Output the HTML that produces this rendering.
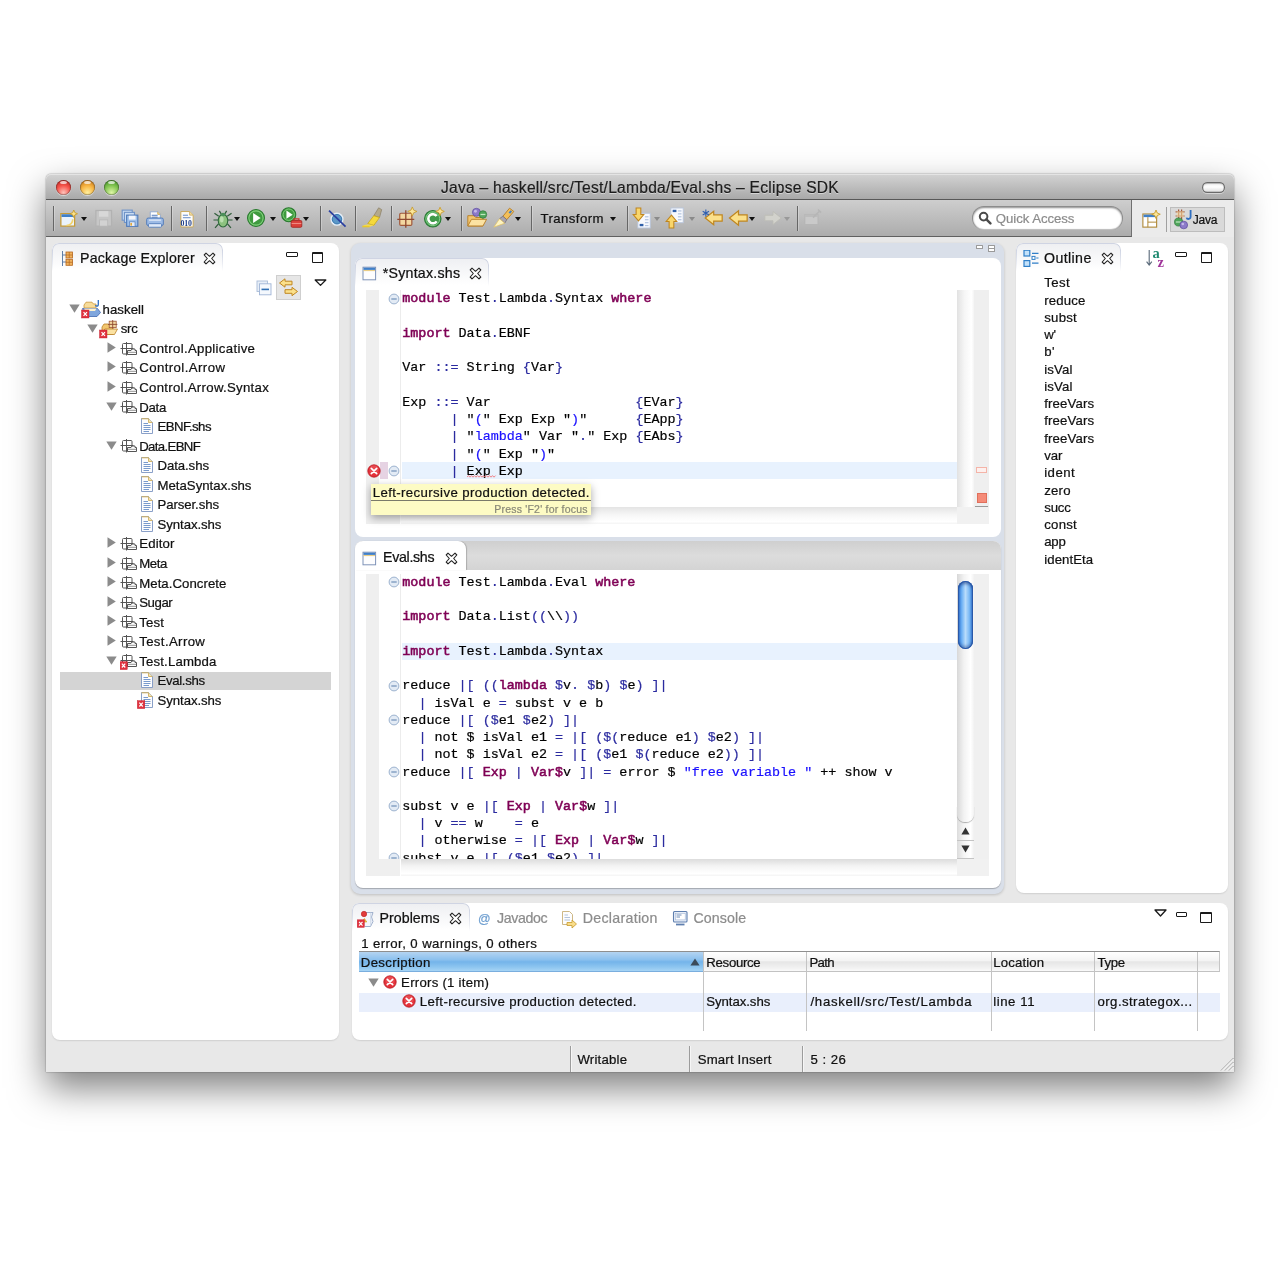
<!DOCTYPE html>
<html lang="en"><head><meta charset="utf-8"><title>Java - haskell/src/Test/Lambda/Eval.shs - Eclipse SDK</title>
<style>
html,body{margin:0;padding:0;background:#fff;}
body{width:1280px;height:1280px;position:relative;overflow:hidden;font-family:"Liberation Sans",sans-serif;font-size:13.2px;color:#000;}
.abs{position:absolute;}
.t{position:absolute;white-space:pre;line-height:1;-webkit-text-stroke:.22px currentColor;}
#root{position:absolute;left:0;top:0;width:1280px;height:1280px;will-change:transform;}
#win{position:absolute;left:45.5px;top:174px;width:1188.7px;height:898px;background:#e8e8e8;border-radius:5px 5px 0 0;box-shadow:0 16px 36px rgba(0,0,0,.5),0 0 1.5px rgba(0,0,0,.6);}
#titlebar{position:absolute;left:45.5px;top:174px;width:1188.7px;height:26px;border-radius:5px 5px 0 0;background:linear-gradient(#d3d3d3,#cdcdcd 15%,#a9a9a9);box-shadow:inset 0 1px 0 #e4e4e4;border-bottom:1px solid #585858;box-sizing:border-box;}
#title{left:45px;top:180px;width:1190px;text-align:center;font-size:15.6px;letter-spacing:.25px;color:#1c1c1c;text-shadow:0 1px 0 rgba(255,255,255,.45);}
.tl{position:absolute;top:179.5px;width:15px;height:15px;border-radius:50%;box-shadow:0 1px 1px rgba(255,255,255,.55),inset 0 0 1px .6px rgba(0,0,0,.45);}
#toolbar{position:absolute;left:45.5px;top:200px;width:1086px;height:36.5px;background:linear-gradient(#cecece,#acacac);border-bottom:1px solid #606060;border-right:1.3px solid #707070;box-sizing:border-box;}
.sep{position:absolute;top:205.6px;width:1.3px;height:25px;background:#666;box-shadow:1px 0 0 rgba(255,255,255,.25);}
.dd{position:absolute;width:0;height:0;border-left:3px solid transparent;border-right:3px solid transparent;border-top:4.6px solid #111;margin-top:1px;}
.dd.dis{border-top-color:#8a8a8a;}
.panel{position:absolute;background:#fff;border-radius:8px;box-shadow:0 1px 1.5px rgba(0,0,0,.1);}
.ui{font-size:13.2px;letter-spacing:.45px;color:#111;}
/*c*/.code{-webkit-text-stroke:.2px currentColor;font-family:"Liberation Mono",monospace;font-size:13.4px;white-space:pre;position:absolute;line-height:17.2px;color:#000;}
.k{color:#7f0055;-webkit-text-stroke:.55px #7f0055;}
.o{color:#2c2ca0;}
.s{color:#1a10ff;}
.tab{background:linear-gradient(#eeeff2,#fff 92%);border-radius:7px 7px 0 0;box-sizing:border-box;}
.tab::after{content:"";position:absolute;left:0;top:0;right:0;bottom:0;border:1px solid #cfd4e3;border-bottom:none;border-radius:7px 7px 0 0;-webkit-mask-image:linear-gradient(#000 25%,transparent 98%);mask-image:linear-gradient(#000 25%,transparent 98%);}
.tabt{font-size:13.6px;letter-spacing:.5px;color:#111;}
.tree{font-size:12.5px;letter-spacing:.39px;color:#111;}
.sq{background:repeating-linear-gradient(135deg,transparent 0,transparent 1px,#e8404a 1px,#e8404a 2px) 0 100%/100% 2px no-repeat;padding-right:4px;margin-right:-4px;}

</style></head>
<body>
<div id="root">
<!-- window -->
<div id="win"></div>
<div id="titlebar"></div>
<div class="tl" style="left:55.7px;background:radial-gradient(circle at 50% 85%,#ffc4bc 0,#f6554c 48%,#c9302a 80%,#8e1d18 100%);"></div>
<div class="tl" style="left:79.9px;background:radial-gradient(circle at 50% 85%,#fff0a0 0,#f7b441 48%,#cf8424 80%,#8f5712 100%);"></div>
<div class="tl" style="left:104.1px;background:radial-gradient(circle at 50% 85%,#e0f7a8 0,#84c653 48%,#4f9a30 80%,#2f6a1c 100%);"></div>
<div class="abs" style="left:59.7px;top:180.6px;width:7px;height:3.6px;border-radius:50%;background:rgba(255,255,255,.7);filter:blur(.6px)"></div>
<div class="abs" style="left:83.9px;top:180.6px;width:7px;height:3.6px;border-radius:50%;background:rgba(255,255,255,.7);filter:blur(.6px)"></div>
<div class="abs" style="left:108.1px;top:180.6px;width:7px;height:3.6px;border-radius:50%;background:rgba(255,255,255,.7);filter:blur(.6px)"></div>
<div class="t" id="title">Java – haskell/src/Test/Lambda/Eval.shs – Eclipse SDK</div>
<div class="abs" style="left:1202px;top:182.3px;width:23px;height:10.4px;border-radius:5.2px;background:linear-gradient(#f0f0f0,#fdfdfd 45%,#d8d8d8);box-shadow:inset 0 0 0 1.2px #6a6a6a,inset 0 2px 1.5px rgba(0,0,0,.18),0 1px 0 rgba(255,255,255,.45);"></div>

<!-- toolbar -->
<div id="toolbar"></div>
<div class="abs" style="left:1131.5px;top:200px;width:102.7px;height:37px;background:#ebebeb;"></div>
<div class="sep" style="left:53px"></div>
<!-- new -->
<svg class="abs" style="left:59px;top:208px" width="20" height="20" viewBox="0 0 16 16"><rect x="1.5" y="4.5" width="11" height="10" fill="#eaf3fc" stroke="#c49a3a"/><rect x="2" y="5" width="10" height="2.2" fill="#3f7fc8"/><path d="M11 9 Q11 13.5 6 14" fill="none" stroke="#f3d36b" stroke-width="1.3"/><path d="M11.8 1.6 L12.7 3.7 L14.8 4.6 L12.7 5.5 L11.8 7.6 L10.9 5.5 L8.8 4.6 L10.9 3.7 Z" fill="#fbe28a" stroke="#c89b2c" stroke-width=".7"/></svg>
<div class="dd" style="left:81px;top:216px"></div>
<!-- save disabled -->
<svg class="abs" style="left:94px;top:208px" width="20" height="20" viewBox="0 0 16 16"><rect x="1.5" y="2" width="12.5" height="12.5" fill="#c6c6c6" stroke="#b2b2b2"/><rect x="4" y="2.5" width="7.5" height="4.5" fill="#d8d8d8"/><rect x="4.5" y="9.5" width="6.5" height="5" fill="#d2d2d2" stroke="#b5b5b5" stroke-width=".6"/></svg>
<!-- save all -->
<svg class="abs" style="left:120.5px;top:209px" width="18" height="19" viewBox="0 0 16 17"><rect x="1" y="1" width="9" height="9" fill="#c9dcf2" stroke="#6f93c8"/><rect x="3" y="3" width="9" height="9" fill="#c9dcf2" stroke="#6f93c8"/><rect x="5" y="5.5" width="10" height="10" fill="#9fc0ea" stroke="#4f79b8"/><rect x="7" y="6" width="6" height="3.5" fill="#f3f6fb"/><rect x="7.5" y="11.5" width="5" height="4" fill="#e9eef7" stroke="#4f79b8" stroke-width=".6"/><rect x="8.3" y="12.5" width="1.5" height="2.4" fill="#e2a93b"/></svg>
<!-- print -->
<svg class="abs" style="left:145px;top:209.5px" width="20" height="19" viewBox="0 0 16 16"><path d="M4 7 V1.5 H10.5 L12.5 3.5 V7 Z" fill="#fff" stroke="#8fa9d1" stroke-width=".8"/><path d="M10.3 1.5 V3.7 H12.5" fill="#f0d48a" stroke="#c9a24a" stroke-width=".6"/><rect x="5.2" y="4" width="5" height=".9" fill="#5f86c4"/><rect x="5.2" y="5.6" width="5" height=".9" fill="#5f86c4"/><rect x="1" y="6.8" width="14" height="6.2" rx="1.2" fill="#9dbbe6" stroke="#4f79b8" stroke-width=".8"/><rect x="2.5" y="11.5" width="11" height="3" rx=".8" fill="#dfe9f8" stroke="#4f79b8" stroke-width=".7"/><rect x="3" y="8" width="10" height="1" fill="#e8f0fb"/></svg>
<div class="sep" style="left:171px"></div>
<!-- binary -->
<svg class="abs" style="left:179px;top:209.5px" width="16" height="18.5" viewBox="0 0 15 18"><path d="M1.5 1.5 H10 L13.5 5 V16.5 H1.5 Z" fill="#fdfdfd" stroke="#c9a655" stroke-width=".9"/><path d="M10 1.5 V5 H13.5" fill="#f4dfa4" stroke="#c9a655" stroke-width=".7"/><rect x="3.5" y="4.6" width="5" height="1" fill="#6b8fc9"/><rect x="3.5" y="7" width="7.5" height="1" fill="#6b8fc9"/><text x="1.2" y="15.6" font-family="Liberation Serif,serif" font-weight="bold" font-size="7.6" fill="#1f3f8a" letter-spacing="-.2">010</text></svg>
<div class="sep" style="left:206px"></div>
<!-- debug bug -->
<svg class="abs" style="left:212px;top:208.5px" width="22" height="22" viewBox="0 0 18 18"><g stroke="#2f5d3a" stroke-width="1" fill="none"><path d="M5.5 6 L2 3.5 M5 9 H1.2 M5.5 12 L2.5 15.5 M12.5 6 L16 3.5 M13 9 H16.8 M12.5 12 L15.5 15.5 M7.5 4 L6 1.5 M10.5 4 L12 1.5"/></g><ellipse cx="9" cy="9.5" rx="3.9" ry="5.2" fill="#8cc27f" stroke="#2f6b3c" stroke-width=".9"/><ellipse cx="9" cy="4.6" rx="2" ry="1.5" fill="#4c8f5a"/><ellipse cx="8" cy="8.5" rx="1.5" ry="2.5" fill="#c6e6bd" opacity=".8"/></svg>
<div class="dd" style="left:234px;top:216px"></div>
<!-- run -->
<svg class="abs" style="left:246.4px;top:208.3px" width="20" height="20" viewBox="0 0 18 18"><circle cx="9" cy="9" r="7.6" fill="#3f9a3f" stroke="#2a7a2f" stroke-width="1"/><circle cx="9" cy="9" r="6.4" fill="none" stroke="#7fcf7a" stroke-width="1"/><path d="M6.4 4.4 L13.2 9 L6.4 13.6 Z" fill="#fff"/></svg>
<div class="dd" style="left:269.5px;top:216px"></div>
<!-- run external -->
<svg class="abs" style="left:280px;top:206px" width="23" height="23" viewBox="0 0 19 19"><circle cx="7.2" cy="7.2" r="5.8" fill="#3f9a3f" stroke="#2a7a2f" stroke-width=".9"/><circle cx="7.2" cy="7.2" r="4.7" fill="none" stroke="#7fcf7a" stroke-width=".8"/><path d="M5.3 3.8 L10.5 7.2 L5.3 10.6 Z" fill="#fff"/><rect x="9.2" y="12" width="8.8" height="5.6" rx="1" fill="#d9403a" stroke="#a32520" stroke-width=".7"/><path d="M11.6 12 V10.6 H15.6 V12" fill="none" stroke="#c5332d" stroke-width="1.1"/><rect x="9.6" y="14" width="8" height=".9" fill="#f08a80"/></svg>
<div class="dd" style="left:303px;top:216px"></div>
<div class="sep" style="left:320px"></div>
<!-- skip breakpoints -->
<svg class="abs" style="left:326px;top:207px" width="22" height="22" viewBox="0 0 18 18"><circle cx="9" cy="10" r="4.6" fill="#5f9fd0" stroke="#e4eef8" stroke-width="1.6"/><circle cx="9" cy="10" r="3.9" fill="#5a97c8" stroke="#2f6fa8" stroke-width=".7"/><path d="M2.5 3 L16 16" stroke="#2a3fa0" stroke-width="1.4"/></svg>
<div class="sep" style="left:355px"></div>
<!-- highlighter -->
<svg class="abs" style="left:361px;top:206px" width="22" height="23" viewBox="0 0 18 19"><path d="M10.5 8 L14.5 1.5 L17 3 L15.2 9.5 Z" fill="#b4a98a" stroke="#8a8068" stroke-width=".6"/><path d="M5.5 14.5 L10.5 8 L15.2 9.5 L10.5 16 Z" fill="#f5d93b" stroke="#c9a91e" stroke-width=".7"/><path d="M1 16.5 Q5 14.5 10.5 16 L6 17.6 Z" fill="#f6dc4a"/><path d="M1 17 H7" stroke="#e8c92c" stroke-width="1.2"/></svg>
<div class="sep" style="left:391px"></div>
<!-- new package -->
<svg class="abs" style="left:396px;top:206px" width="22" height="23" viewBox="0 0 18 19"><rect x="3" y="6" width="10" height="10" rx="1" fill="#f3d7a0" stroke="#a0573a" stroke-width="1"/><path d="M8 3.5 V18 M1 11 H15" stroke="#8f4a30" stroke-width="1.1"/><path d="M13.4 .8 L14.5 3.4 L17.2 4.5 L14.5 5.6 L13.4 8.2 L12.3 5.6 L9.6 4.5 L12.3 3.4 Z" fill="#fbe69a" stroke="#c89b2c" stroke-width=".7"/></svg>
<!-- new class -->
<svg class="abs" style="left:423px;top:206px" width="22" height="23" viewBox="0 0 18 19"><circle cx="8" cy="10.5" r="6.8" fill="#3f9a4a" stroke="#2a7a35" stroke-width=".9"/><circle cx="8" cy="10.5" r="5.7" fill="none" stroke="#86cf8a" stroke-width=".8"/><path d="M11.2 8.3 A3.8 3.8 0 1 0 11.2 12.7" fill="none" stroke="#fff" stroke-width="2.1"/><path d="M14 1 L15 3.4 L17.5 4.5 L15 5.6 L14 8 L13 5.6 L10.5 4.5 L13 3.4 Z" fill="#fbe69a" stroke="#c89b2c" stroke-width=".7"/></svg>
<div class="dd" style="left:445px;top:216px"></div>
<div class="sep" style="left:461px"></div>
<!-- open type -->
<svg class="abs" style="left:466px;top:206px" width="23" height="23" viewBox="0 0 19 19"><path d="M1.5 8 H6.5 L8 9.5 H14 V16.5 H1.5 Z" fill="#f2c66e" stroke="#b9812b" stroke-width=".8"/><path d="M1.5 16.5 L4.5 11 H17 L14 16.5 Z" fill="#fbe2a2" stroke="#b9812b" stroke-width=".8"/><circle cx="8.6" cy="5.2" r="3.3" fill="#8c7ac9" stroke="#5d4c9e" stroke-width=".6"/><circle cx="7.8" cy="4.3" r="1.2" fill="#c3b8ea"/><circle cx="14" cy="7" r="3.1" fill="#4fa55a" stroke="#2f7a3a" stroke-width=".6"/><rect x="12" y="6.5" width="4" height="1" fill="#bfe6c0"/></svg>
<!-- search -->
<svg class="abs" style="left:492px;top:206px" width="23" height="23" viewBox="0 0 19 19"><path d="M9 8.5 L14.5 1.8 L18 4.5 L12.2 11.3 Z" fill="#f2bf5a" stroke="#b9812b" stroke-width=".8"/><rect x="14.3" y="3.6" width="1.6" height="2.6" transform="rotate(40 15 5)" fill="#3f7fc8"/><path d="M6.2 10.5 L9 8.5 L12.2 11.3 L10.5 14.2 Z" fill="#a9a4ae" stroke="#77727c" stroke-width=".7"/><path d="M1.5 17.5 L6.2 10.5 L10.5 14.2 Z" fill="#fdf3c0" stroke="#e3c464" stroke-width=".6"/></svg>
<div class="dd" style="left:515px;top:216px"></div>
<div class="sep" style="left:531px"></div>
<div class="t " style="left:540.5px;top:212px;font-size:13.2px;letter-spacing:0.43px;color:#111;">Transform</div>
<div class="dd" style="left:609.5px;top:216px;border-left-width:3px;border-right-width:3px;"></div>
<div class="sep" style="left:627px"></div>
<!-- next annotation -->
<svg class="abs" style="left:632px;top:206px" width="20" height="24" viewBox="0 0 17 20"><rect x="5" y="6" width="10.5" height="12.5" fill="#f7f9fd" stroke="#b9c6dc" stroke-width=".8"/><rect x="6.5" y="15" width="3.2" height="2" fill="#2f5fa8"/><path d="M11 9 H14 M11 11.5 H14 M11 14 H14 M11 16.5 H14" stroke="#9fb4d6" stroke-width=".8"/><path d="M3.5 1.5 H7.5 V7 H10 L5.5 12.5 L1 7 H3.5 Z" fill="#f9d66b" stroke="#c0861f" stroke-width=".9"/></svg>
<div class="dd dis" style="left:653.5px;top:216px;border-left-width:3px;border-right-width:3px;"></div>
<!-- prev annotation -->
<svg class="abs" style="left:665px;top:206px" width="20" height="24" viewBox="0 0 17 20"><rect x="5" y="1.5" width="10.5" height="12.5" fill="#f7f9fd" stroke="#b9c6dc" stroke-width=".8"/><rect x="6.5" y="3" width="3.2" height="2" fill="#2f5fa8"/><path d="M11 4 H14 M11 6.5 H14 M11 9 H14 M11 11.5 H14" stroke="#9fb4d6" stroke-width=".8"/><path d="M3.5 18.5 H7.5 V13 H10 L5.5 7.5 L1 13 H3.5 Z" fill="#f9d66b" stroke="#c0861f" stroke-width=".9"/></svg>
<div class="dd dis" style="left:688.5px;top:216px;border-left-width:3px;border-right-width:3px;"></div>
<!-- last edit -->
<svg class="abs" style="left:701px;top:208px" width="23" height="20" viewBox="0 0 19 16"><path d="M17.5 5.5 V10.5 H10.5 V13.5 L3.5 8 L10.5 2.5 V5.5 Z" fill="#fbe08a" stroke="#c0861f" stroke-width="1"/><path d="M4 1 V7 M1.4 2.5 L6.6 5.5 M1.4 5.5 L6.6 2.5" stroke="#2f5fb0" stroke-width=".9"/></svg>
<!-- back -->
<svg class="abs" style="left:728px;top:208px" width="21" height="20" viewBox="0 0 17 16"><path d="M15.5 5.5 V10.5 H8.5 V13.8 L1.2 8 L8.5 2.2 V5.5 Z" fill="#fbe08a" stroke="#c0861f" stroke-width="1"/></svg>
<div class="dd" style="left:749px;top:216px"></div>
<!-- forward disabled -->
<svg class="abs" style="left:763px;top:208px" width="20" height="20" viewBox="0 0 16 16"><path d="M1.5 5.8 V10.2 H8 V13.2 L14.6 8 L8 2.8 V5.8 Z" fill="#d2d2cc" stroke="#bdbdb6" stroke-width=".7"/></svg>
<div class="dd dis" style="left:784px;top:216px;border-left-width:3px;border-right-width:3px;border-top-color:#999"></div>
<div class="sep" style="left:797px"></div>
<!-- pin disabled -->
<svg class="abs" style="left:803px;top:207px" width="20" height="20" viewBox="0 0 16 16"><rect x="1.5" y="6" width="10.5" height="8" fill="#c9c9c9" stroke="#b4b4b4" stroke-width=".7"/><rect x="1.5" y="6" width="10.5" height="2" fill="#bcbcbc"/><path d="M8 8.5 L13.5 3 M12 2 L14.5 4.5" stroke="#b6b6b6" stroke-width="1.2"/></svg>
<!-- quick access -->
<div class="abs" style="left:973px;top:207px;width:149px;height:22px;border-radius:11px;background:#fff;box-shadow:inset 0 1px 2px rgba(0,0,0,.45),0 1px 0 rgba(255,255,255,.45),0 0 0 1px #8c8c8c;"></div>
<svg class="abs" style="left:978px;top:211px" width="14" height="14" viewBox="0 0 14 14"><circle cx="5.6" cy="5.6" r="3.8" fill="none" stroke="#4a4a4a" stroke-width="2"/><path d="M8.4 8.4 L12.4 12.4" stroke="#4a4a4a" stroke-width="2.4" stroke-linecap="round"/></svg>
<div class="t " style="left:995.8px;top:212px;font-size:13.2px;letter-spacing:-0.05px;color:#8c8c8c;">Quick Access</div>
<!-- perspective -->
<svg class="abs" style="left:1141px;top:209px" width="20" height="20" viewBox="0 0 16 16"><rect x="1.5" y="4" width="11" height="10.5" fill="#fff" stroke="#b08a3a" stroke-width=".9"/><rect x="2" y="4.5" width="10" height="2" fill="#3f7fc8"/><path d="M5.5 6.5 V14.5 M5.5 10.5 H12.5" stroke="#b08a3a" stroke-width=".8"/><path d="M12 .8 L13 3.2 L15.4 4.2 L13 5.2 L12 7.6 L11 5.2 L8.6 4.2 L11 3.2 Z" fill="#fbe69a" stroke="#c89b2c" stroke-width=".7"/></svg>
<div class="abs" style="left:1166px;top:207px;width:1px;height:25px;background:#a0a0a0;"></div>
<div class="abs" style="left:1170px;top:207px;width:55px;height:25px;background:#d9d9d9;border:1px solid #bdbdbd;box-sizing:border-box;"></div>
<svg class="abs" style="left:1172px;top:208px" width="24" height="22" viewBox="0 0 20 18"><path d="M5.5 1 V9 M8 1 V9 M3 3 H10.5 M3 6.5 H10.5" stroke="#a0573a" stroke-width="1" fill="none"/><rect x="3.8" y="2.5" width="6" height="5" fill="#f3d7a0" opacity=".6"/><circle cx="5.5" cy="11.5" r="3.4" fill="#4fa55a" stroke="#2f7a3a" stroke-width=".6"/><rect x="3.2" y="11" width="4.6" height="1" fill="#bfe6c0"/><circle cx="9.8" cy="14" r="3.2" fill="#8c7ac9" stroke="#5d4c9e" stroke-width=".6"/><circle cx="9" cy="13.2" r="1.1" fill="#c3b8ea"/><path d="M15.5 1.5 V7 Q15.5 9 13.6 9 Q12.4 9 12.2 7.8" fill="none" stroke="#2f6fc0" stroke-width="1.5"/></svg>
<div class="t " style="left:1192.8px;top:214px;font-size:12px;letter-spacing:-0.22px;color:#111;">Java</div>

<!-- explorer -->
<div class="panel" style="left:52px;top:243px;width:287px;height:797px;"></div>
<div class="abs tab" style="left:52px;top:243px;width:171px;height:29px;"></div>
<svg class="abs" style="left:61px;top:250px" width="14" height="17" viewBox="0 0 14 17"><path d="M1.5 1 V16 M1.5 5 H5 M1.5 12 H5" stroke="#5f7fa8" stroke-width="1" fill="none"/><rect x="5" y="2" width="6.5" height="6" fill="#f0b35e" stroke="#b5651d" stroke-width=".8"/><path d="M8.25 2 V8 M5 5 H11.5" stroke="#b5651d" stroke-width=".7"/><rect x="5" y="9.3" width="6.5" height="6" fill="#f0b35e" stroke="#b5651d" stroke-width=".8"/><path d="M8.25 9.3 V15.3 M5 12.3 H11.5" stroke="#b5651d" stroke-width=".7"/></svg>
<div class="t tabt" style="left:80.1px;top:251px;font-size:14.2px;letter-spacing:0.17px;">Package Explorer</div>
<svg class="abs" style="left:202.5px;top:252px" width="13" height="13" viewBox="0 0 13 13"><path d="M1.2 3 L3 1.2 L6.5 4.3 L10 1.2 L11.8 3 L8.7 6.5 L11.8 10 L10 11.8 L6.5 8.7 L3 11.8 L1.2 10 L4.3 6.5 Z" fill="#fff" stroke="#222" stroke-width="1.1" stroke-linejoin="round"/></svg>
<div class="abs" style="left:286px;top:251.8px;width:12px;height:5px;border:1.6px solid #1a1a1a;border-radius:1px;box-sizing:border-box;background:#fff"></div>
<div class="abs" style="left:311.5px;top:252px;width:11.8px;height:11.2px;border:1.4px solid #1a1a1a;border-top-width:2.4px;border-radius:1px;box-sizing:border-box;background:#fff"></div>
<svg class="abs" style="left:256px;top:280px" width="16" height="16" viewBox="0 0 16 16"><rect x="1" y="1" width="10.5" height="10.5" fill="#e7eef8" stroke="#a9bcd8" stroke-width=".9"/><rect x="3.5" y="3.8" width="11.5" height="11" fill="#f4f8fd" stroke="#9fb4d6" stroke-width=".9"/><rect x="5.5" y="8.6" width="7.5" height="1.6" fill="#2f6fb5"/></svg>
<div class="abs" style="left:276px;top:275px;width:25px;height:25px;background:#e6e6e6;border:1px solid #cfcfcf;box-sizing:border-box;"></div>
<svg class="abs" style="left:278px;top:277px" width="21" height="21" viewBox="0 0 21 21"><path d="M1.5 6 L7 1.8 V4.2 H14 V7.8 H7 V10.2 Z" fill="#fbe08a" stroke="#c0861f" stroke-width="1"/><path d="M19.5 14.5 L14 10.3 V12.7 H7 V16.3 H14 V18.7 Z" fill="#fbe08a" stroke="#c0861f" stroke-width="1"/></svg>
<svg class="abs" style="left:314.3px;top:278.6px" width="13" height="8" viewBox="0 0 13 8"><path d="M1.2 1 H11.8 L6.5 6.4 Z" fill="#fff" stroke="#1a1a1a" stroke-width="1.3" stroke-linejoin="round"/></svg>
<svg class="abs" style="left:68.7px;top:304.3px" width="11" height="9" viewBox="0 0 11 9"><path d="M.3 .5 H10.7 L5.5 8.8 Z" fill="#8b8b8b"/></svg>
<svg class="abs" style="left:81.2px;top:299.2px" width="21" height="20" viewBox="0 0 21 20"><path d="M3 6 L5 3.2 H11 L12.5 5 H15 V9 H3 Z" fill="#f7dc9a" stroke="#c9963a" stroke-width=".8"/><path d="M1.5 9.5 H16.5 L19.5 13.5 L16 17.5 H4 Z" fill="#7fa6dd" stroke="#3f67b0" stroke-width=".8"/><path d="M3 9.5 H15.5 L14 12 H4.5 Z" fill="#fdf2cf"/><path d="M17.3 1 V5.5 Q17.3 7.2 15.7 7.2 Q14.7 7.2 14.5 6.2" fill="none" stroke="#2f6fc0" stroke-width="1.3"/><rect x="0.5" y="11" width="7.5" height="8" fill="#e0333f" stroke="#c01828" stroke-width=".4"/><path d="M2.55 13.1 l3.4 3.8 m0 -3.8 l-3.4 3.8" stroke="#fff" stroke-width="1.2"/></svg>
<div class="t tree" style="left:102.5px;top:303px;font-size:13.2px;letter-spacing:0.08px;">haskell</div>
<svg class="abs" style="left:87.2px;top:323.9px" width="11" height="9" viewBox="0 0 11 9"><path d="M.3 .5 H10.7 L5.5 8.8 Z" fill="#8b8b8b"/></svg>
<svg class="abs" style="left:99.4px;top:319.2px" width="21" height="20" viewBox="0 0 21 20"><path d="M3 8 L5 5 H9.5 L11 7 H14 V15.5 H3 Z" fill="#f2c66e" stroke="#b9812b" stroke-width=".8"/><path d="M3 15.5 L5.8 10 H18.5 L15.5 15.5 Z" fill="#fbe2a2" stroke="#b9812b" stroke-width=".8"/><rect x="10.2" y="2.2" width="7" height="6.4" fill="#f3d7a0" stroke="#a0573a" stroke-width=".8"/><path d="M13.7 1 V9.6 M9 5.4 H18.4" stroke="#8f4a30" stroke-width=".9"/><rect x="0.5" y="11" width="7.5" height="8" fill="#e0333f" stroke="#c01828" stroke-width=".4"/><path d="M2.55 13.1 l3.4 3.8 m0 -3.8 l-3.4 3.8" stroke="#fff" stroke-width="1.2"/></svg>
<div class="t tree" style="left:120.8px;top:322px;font-size:13.2px;letter-spacing:-0.29px;">src</div>
<svg class="abs" style="left:106.7px;top:341.6px" width="9" height="11" viewBox="0 0 9 11"><path d="M.5 .3 V10.7 L8.8 5.5 Z" fill="#8b8b8b"/></svg>
<svg class="abs" style="left:119.5px;top:340.6px" width="18" height="17" viewBox="0 0 18 17"><rect x="2.5" y="2.5" width="9.5" height="10.5" rx="1" fill="#fff" stroke="#555" stroke-width="1"/><path d="M6.5 1 V14.5 M.5 7.5 H13.5" stroke="#555" stroke-width="1"/><path d="M7.5 9.5 H11 L12 8 H15 V9.5 H16.5 V13.5 H7.5 Z" fill="#fff" stroke="#555" stroke-width="1"/><path d="M8 11.3 H16" stroke="#777" stroke-width=".8"/></svg>
<div class="t tree" style="left:139.2px;top:342px;font-size:13.2px;letter-spacing:0.32px;">Control.Applicative</div>
<svg class="abs" style="left:106.7px;top:361.2px" width="9" height="11" viewBox="0 0 9 11"><path d="M.5 .3 V10.7 L8.8 5.5 Z" fill="#8b8b8b"/></svg>
<svg class="abs" style="left:119.5px;top:360.2px" width="18" height="17" viewBox="0 0 18 17"><rect x="2.5" y="2.5" width="9.5" height="10.5" rx="1" fill="#fff" stroke="#555" stroke-width="1"/><path d="M6.5 1 V14.5 M.5 7.5 H13.5" stroke="#555" stroke-width="1"/><path d="M7.5 9.5 H11 L12 8 H15 V9.5 H16.5 V13.5 H7.5 Z" fill="#fff" stroke="#555" stroke-width="1"/><path d="M8 11.3 H16" stroke="#777" stroke-width=".8"/></svg>
<div class="t tree" style="left:139.2px;top:361px;font-size:13.2px;letter-spacing:0.43px;">Control.Arrow</div>
<svg class="abs" style="left:106.7px;top:380.7px" width="9" height="11" viewBox="0 0 9 11"><path d="M.5 .3 V10.7 L8.8 5.5 Z" fill="#8b8b8b"/></svg>
<svg class="abs" style="left:119.5px;top:379.7px" width="18" height="17" viewBox="0 0 18 17"><rect x="2.5" y="2.5" width="9.5" height="10.5" rx="1" fill="#fff" stroke="#555" stroke-width="1"/><path d="M6.5 1 V14.5 M.5 7.5 H13.5" stroke="#555" stroke-width="1"/><path d="M7.5 9.5 H11 L12 8 H15 V9.5 H16.5 V13.5 H7.5 Z" fill="#fff" stroke="#555" stroke-width="1"/><path d="M8 11.3 H16" stroke="#777" stroke-width=".8"/></svg>
<div class="t tree" style="left:139.2px;top:381px;font-size:13.2px;letter-spacing:0.30px;">Control.Arrow.Syntax</div>
<svg class="abs" style="left:105.8px;top:402.1px" width="11" height="9" viewBox="0 0 11 9"><path d="M.3 .5 H10.7 L5.5 8.8 Z" fill="#8b8b8b"/></svg>
<svg class="abs" style="left:119.5px;top:399.2px" width="18" height="17" viewBox="0 0 18 17"><rect x="2.5" y="2.5" width="9.5" height="10.5" rx="1" fill="#fff" stroke="#555" stroke-width="1"/><path d="M6.5 1 V14.5 M.5 7.5 H13.5" stroke="#555" stroke-width="1"/><path d="M7.5 9.5 H11 L12 8 H15 V9.5 H16.5 V13.5 H7.5 Z" fill="#fff" stroke="#555" stroke-width="1"/><path d="M8 11.3 H16" stroke="#777" stroke-width=".8"/></svg>
<div class="t tree" style="left:139.2px;top:401px;font-size:13.2px;letter-spacing:-0.27px;">Data</div>
<svg class="abs" style="left:136.5px;top:416.8px" width="17" height="18" viewBox="0 0 17 18"><path d="M4.5 1.5 H11.5 L15.5 5.5 V16.5 H4.5 Z" fill="#fdfdfe" stroke="#7d95c2" stroke-width=".9"/><path d="M4.5 1.8 H11.3" stroke="#d6b35a" stroke-width="1"/><path d="M11.5 1.5 V5.5 H15.5" fill="#f6e3aa" stroke="#c9a655" stroke-width=".8"/><path d="M6.5 6.5 H11 M6.5 8.5 H13.5 M6.5 10.5 H13.5 M6.5 12.5 H13.5 M6.5 14.5 H12" stroke="#6a8fc6" stroke-width=".9"/></svg>
<div class="t tree" style="left:157.5px;top:420px;font-size:13.2px;letter-spacing:-0.56px;">EBNF.shs</div>
<svg class="abs" style="left:105.8px;top:441.1px" width="11" height="9" viewBox="0 0 11 9"><path d="M.3 .5 H10.7 L5.5 8.8 Z" fill="#8b8b8b"/></svg>
<svg class="abs" style="left:119.5px;top:438.3px" width="18" height="17" viewBox="0 0 18 17"><rect x="2.5" y="2.5" width="9.5" height="10.5" rx="1" fill="#fff" stroke="#555" stroke-width="1"/><path d="M6.5 1 V14.5 M.5 7.5 H13.5" stroke="#555" stroke-width="1"/><path d="M7.5 9.5 H11 L12 8 H15 V9.5 H16.5 V13.5 H7.5 Z" fill="#fff" stroke="#555" stroke-width="1"/><path d="M8 11.3 H16" stroke="#777" stroke-width=".8"/></svg>
<div class="t tree" style="left:139.2px;top:440px;font-size:13.2px;letter-spacing:-0.64px;">Data.EBNF</div>
<svg class="abs" style="left:136.5px;top:455.9px" width="17" height="18" viewBox="0 0 17 18"><path d="M4.5 1.5 H11.5 L15.5 5.5 V16.5 H4.5 Z" fill="#fdfdfe" stroke="#7d95c2" stroke-width=".9"/><path d="M4.5 1.8 H11.3" stroke="#d6b35a" stroke-width="1"/><path d="M11.5 1.5 V5.5 H15.5" fill="#f6e3aa" stroke="#c9a655" stroke-width=".8"/><path d="M6.5 6.5 H11 M6.5 8.5 H13.5 M6.5 10.5 H13.5 M6.5 12.5 H13.5 M6.5 14.5 H12" stroke="#6a8fc6" stroke-width=".9"/></svg>
<div class="t tree" style="left:157.5px;top:459px;font-size:13.2px;letter-spacing:-0.08px;">Data.shs</div>
<svg class="abs" style="left:136.5px;top:475.4px" width="17" height="18" viewBox="0 0 17 18"><path d="M4.5 1.5 H11.5 L15.5 5.5 V16.5 H4.5 Z" fill="#fdfdfe" stroke="#7d95c2" stroke-width=".9"/><path d="M4.5 1.8 H11.3" stroke="#d6b35a" stroke-width="1"/><path d="M11.5 1.5 V5.5 H15.5" fill="#f6e3aa" stroke="#c9a655" stroke-width=".8"/><path d="M6.5 6.5 H11 M6.5 8.5 H13.5 M6.5 10.5 H13.5 M6.5 12.5 H13.5 M6.5 14.5 H12" stroke="#6a8fc6" stroke-width=".9"/></svg>
<div class="t tree" style="left:157.5px;top:479px;font-size:13.2px;letter-spacing:0.01px;">MetaSyntax.shs</div>
<svg class="abs" style="left:136.5px;top:495.0px" width="17" height="18" viewBox="0 0 17 18"><path d="M4.5 1.5 H11.5 L15.5 5.5 V16.5 H4.5 Z" fill="#fdfdfe" stroke="#7d95c2" stroke-width=".9"/><path d="M4.5 1.8 H11.3" stroke="#d6b35a" stroke-width="1"/><path d="M11.5 1.5 V5.5 H15.5" fill="#f6e3aa" stroke="#c9a655" stroke-width=".8"/><path d="M6.5 6.5 H11 M6.5 8.5 H13.5 M6.5 10.5 H13.5 M6.5 12.5 H13.5 M6.5 14.5 H12" stroke="#6a8fc6" stroke-width=".9"/></svg>
<div class="t tree" style="left:157.5px;top:498px;font-size:13.2px;letter-spacing:-0.09px;">Parser.shs</div>
<svg class="abs" style="left:136.5px;top:514.6px" width="17" height="18" viewBox="0 0 17 18"><path d="M4.5 1.5 H11.5 L15.5 5.5 V16.5 H4.5 Z" fill="#fdfdfe" stroke="#7d95c2" stroke-width=".9"/><path d="M4.5 1.8 H11.3" stroke="#d6b35a" stroke-width="1"/><path d="M11.5 1.5 V5.5 H15.5" fill="#f6e3aa" stroke="#c9a655" stroke-width=".8"/><path d="M6.5 6.5 H11 M6.5 8.5 H13.5 M6.5 10.5 H13.5 M6.5 12.5 H13.5 M6.5 14.5 H12" stroke="#6a8fc6" stroke-width=".9"/></svg>
<div class="t tree" style="left:157.5px;top:518px;font-size:13.2px;letter-spacing:-0.06px;">Syntax.shs</div>
<svg class="abs" style="left:106.7px;top:537.1px" width="9" height="11" viewBox="0 0 9 11"><path d="M.5 .3 V10.7 L8.8 5.5 Z" fill="#8b8b8b"/></svg>
<svg class="abs" style="left:119.5px;top:536.1px" width="18" height="17" viewBox="0 0 18 17"><rect x="2.5" y="2.5" width="9.5" height="10.5" rx="1" fill="#fff" stroke="#555" stroke-width="1"/><path d="M6.5 1 V14.5 M.5 7.5 H13.5" stroke="#555" stroke-width="1"/><path d="M7.5 9.5 H11 L12 8 H15 V9.5 H16.5 V13.5 H7.5 Z" fill="#fff" stroke="#555" stroke-width="1"/><path d="M8 11.3 H16" stroke="#777" stroke-width=".8"/></svg>
<div class="t tree" style="left:139.2px;top:537px;font-size:13.2px;letter-spacing:0.16px;">Editor</div>
<svg class="abs" style="left:106.7px;top:556.7px" width="9" height="11" viewBox="0 0 9 11"><path d="M.5 .3 V10.7 L8.8 5.5 Z" fill="#8b8b8b"/></svg>
<svg class="abs" style="left:119.5px;top:555.7px" width="18" height="17" viewBox="0 0 18 17"><rect x="2.5" y="2.5" width="9.5" height="10.5" rx="1" fill="#fff" stroke="#555" stroke-width="1"/><path d="M6.5 1 V14.5 M.5 7.5 H13.5" stroke="#555" stroke-width="1"/><path d="M7.5 9.5 H11 L12 8 H15 V9.5 H16.5 V13.5 H7.5 Z" fill="#fff" stroke="#555" stroke-width="1"/><path d="M8 11.3 H16" stroke="#777" stroke-width=".8"/></svg>
<div class="t tree" style="left:139.2px;top:557px;font-size:13.2px;letter-spacing:-0.36px;">Meta</div>
<svg class="abs" style="left:106.7px;top:576.2px" width="9" height="11" viewBox="0 0 9 11"><path d="M.5 .3 V10.7 L8.8 5.5 Z" fill="#8b8b8b"/></svg>
<svg class="abs" style="left:119.5px;top:575.2px" width="18" height="17" viewBox="0 0 18 17"><rect x="2.5" y="2.5" width="9.5" height="10.5" rx="1" fill="#fff" stroke="#555" stroke-width="1"/><path d="M6.5 1 V14.5 M.5 7.5 H13.5" stroke="#555" stroke-width="1"/><path d="M7.5 9.5 H11 L12 8 H15 V9.5 H16.5 V13.5 H7.5 Z" fill="#fff" stroke="#555" stroke-width="1"/><path d="M8 11.3 H16" stroke="#777" stroke-width=".8"/></svg>
<div class="t tree" style="left:139.2px;top:577px;font-size:13.2px;letter-spacing:0.06px;">Meta.Concrete</div>
<svg class="abs" style="left:106.7px;top:595.8px" width="9" height="11" viewBox="0 0 9 11"><path d="M.5 .3 V10.7 L8.8 5.5 Z" fill="#8b8b8b"/></svg>
<svg class="abs" style="left:119.5px;top:594.8px" width="18" height="17" viewBox="0 0 18 17"><rect x="2.5" y="2.5" width="9.5" height="10.5" rx="1" fill="#fff" stroke="#555" stroke-width="1"/><path d="M6.5 1 V14.5 M.5 7.5 H13.5" stroke="#555" stroke-width="1"/><path d="M7.5 9.5 H11 L12 8 H15 V9.5 H16.5 V13.5 H7.5 Z" fill="#fff" stroke="#555" stroke-width="1"/><path d="M8 11.3 H16" stroke="#777" stroke-width=".8"/></svg>
<div class="t tree" style="left:139.2px;top:596px;font-size:13.2px;letter-spacing:-0.41px;">Sugar</div>
<svg class="abs" style="left:106.7px;top:615.3px" width="9" height="11" viewBox="0 0 9 11"><path d="M.5 .3 V10.7 L8.8 5.5 Z" fill="#8b8b8b"/></svg>
<svg class="abs" style="left:119.5px;top:614.3px" width="18" height="17" viewBox="0 0 18 17"><rect x="2.5" y="2.5" width="9.5" height="10.5" rx="1" fill="#fff" stroke="#555" stroke-width="1"/><path d="M6.5 1 V14.5 M.5 7.5 H13.5" stroke="#555" stroke-width="1"/><path d="M7.5 9.5 H11 L12 8 H15 V9.5 H16.5 V13.5 H7.5 Z" fill="#fff" stroke="#555" stroke-width="1"/><path d="M8 11.3 H16" stroke="#777" stroke-width=".8"/></svg>
<div class="t tree" style="left:139.2px;top:616px;font-size:13.2px;letter-spacing:0.19px;">Test</div>
<svg class="abs" style="left:106.7px;top:634.9px" width="9" height="11" viewBox="0 0 9 11"><path d="M.5 .3 V10.7 L8.8 5.5 Z" fill="#8b8b8b"/></svg>
<svg class="abs" style="left:119.5px;top:633.9px" width="18" height="17" viewBox="0 0 18 17"><rect x="2.5" y="2.5" width="9.5" height="10.5" rx="1" fill="#fff" stroke="#555" stroke-width="1"/><path d="M6.5 1 V14.5 M.5 7.5 H13.5" stroke="#555" stroke-width="1"/><path d="M7.5 9.5 H11 L12 8 H15 V9.5 H16.5 V13.5 H7.5 Z" fill="#fff" stroke="#555" stroke-width="1"/><path d="M8 11.3 H16" stroke="#777" stroke-width=".8"/></svg>
<div class="t tree" style="left:139.2px;top:635px;font-size:13.2px;letter-spacing:0.38px;">Test.Arrow</div>
<svg class="abs" style="left:105.8px;top:656.2px" width="11" height="9" viewBox="0 0 11 9"><path d="M.3 .5 H10.7 L5.5 8.8 Z" fill="#8b8b8b"/></svg>
<svg class="abs" style="left:119.5px;top:653.4px" width="18" height="17" viewBox="0 0 18 17"><rect x="2.5" y="2.5" width="9.5" height="10.5" rx="1" fill="#fff" stroke="#555" stroke-width="1"/><path d="M6.5 1 V14.5 M.5 7.5 H13.5" stroke="#555" stroke-width="1"/><path d="M7.5 9.5 H11 L12 8 H15 V9.5 H16.5 V13.5 H7.5 Z" fill="#fff" stroke="#555" stroke-width="1"/><path d="M8 11.3 H16" stroke="#777" stroke-width=".8"/><rect x="-0.2" y="8.6" width="7.5" height="8" fill="#e0333f" stroke="#c01828" stroke-width=".4"/><path d="M1.8499999999999999 10.7 l3.4 3.8 m0 -3.8 l-3.4 3.8" stroke="#fff" stroke-width="1.2"/></svg>
<div class="t tree" style="left:139.2px;top:655px;font-size:13.2px;letter-spacing:0.17px;">Test.Lambda</div>
<div class="abs" style="left:60px;top:672.2px;width:271px;height:17.6px;background:#d4d4d4;"></div>
<svg class="abs" style="left:136.5px;top:671.0px" width="17" height="18" viewBox="0 0 17 18"><path d="M4.5 1.5 H11.5 L15.5 5.5 V16.5 H4.5 Z" fill="#fdfdfe" stroke="#7d95c2" stroke-width=".9"/><path d="M4.5 1.8 H11.3" stroke="#d6b35a" stroke-width="1"/><path d="M11.5 1.5 V5.5 H15.5" fill="#f6e3aa" stroke="#c9a655" stroke-width=".8"/><path d="M6.5 6.5 H11 M6.5 8.5 H13.5 M6.5 10.5 H13.5 M6.5 12.5 H13.5 M6.5 14.5 H12" stroke="#6a8fc6" stroke-width=".9"/></svg>
<div class="t tree" style="left:157.5px;top:674px;font-size:13.2px;letter-spacing:-0.33px;">Eval.shs</div>
<svg class="abs" style="left:136.5px;top:690.5px" width="17" height="18" viewBox="0 0 17 18"><path d="M4.5 1.5 H11.5 L15.5 5.5 V16.5 H4.5 Z" fill="#fdfdfe" stroke="#7d95c2" stroke-width=".9"/><path d="M4.5 1.8 H11.3" stroke="#d6b35a" stroke-width="1"/><path d="M11.5 1.5 V5.5 H15.5" fill="#f6e3aa" stroke="#c9a655" stroke-width=".8"/><path d="M6.5 6.5 H11 M6.5 8.5 H13.5 M6.5 10.5 H13.5 M6.5 12.5 H13.5 M6.5 14.5 H12" stroke="#6a8fc6" stroke-width=".9"/><rect x="0.3" y="9.6" width="7.5" height="8" fill="#e0333f" stroke="#c01828" stroke-width=".4"/><path d="M2.3499999999999996 11.7 l3.4 3.8 m0 -3.8 l-3.4 3.8" stroke="#fff" stroke-width="1.2"/></svg>
<div class="t tree" style="left:157.5px;top:694px;font-size:13.2px;letter-spacing:-0.06px;">Syntax.shs</div>
<!-- editors -->
<div class="abs" style="left:351px;top:243px;width:652.5px;height:650.5px;background:#d9dfe9;border-radius:9px;box-shadow:0 1px 3px rgba(0,0,0,.18);"></div>
<div class="abs" style="left:976.3px;top:245px;width:7px;height:3.6px;border:1px solid #9a9a9a;box-sizing:border-box;background:#fff;border-radius:.5px"></div>
<div class="abs" style="left:988px;top:245px;width:7px;height:6.6px;border:1px solid #9a9a9a;box-sizing:border-box;background:linear-gradient(#fff 0,#fff 1.6px,#9a9a9a 1.6px,#9a9a9a 2.6px,#fff 2.6px);border-radius:.5px"></div>
<div class="abs" style="left:354.5px;top:257.7px;width:646px;height:279px;background:#fff;border-radius:8px;"></div>
<div class="abs tab" style="left:354.5px;top:257.7px;width:134.5px;height:29.3px;"></div>
<svg class="abs" style="left:361.8px;top:266.3px" width="15" height="15" viewBox="0 0 15 15"><rect x="1" y="1.2" width="12.6" height="12.6" fill="#fdfdfe" stroke="#7f93b8" stroke-width="1"/><rect x="1.5" y="1.7" width="11.6" height="2.2" fill="#3f7fc8"/><path d="M1.5 4.6 H13" stroke="#e6c36a" stroke-width=".9"/></svg>
<div class="t tabt" style="left:382.8px;top:266px;font-size:14.2px;letter-spacing:0.23px;">*Syntax.shs</div>
<svg class="abs" style="left:468.5px;top:267px" width="13" height="13" viewBox="0 0 13 13"><path d="M1.2 3 L3 1.2 L6.5 4.3 L10 1.2 L11.8 3 L8.7 6.5 L11.8 10 L10 11.8 L6.5 8.7 L3 11.8 L1.2 10 L4.3 6.5 Z" fill="#fff" stroke="#222" stroke-width="1.1" stroke-linejoin="round"/></svg>
<div class="abs" style="left:365.8px;top:290px;width:13.5px;height:233.5px;background:#efefef;"></div>
<div class="abs" style="left:379.3px;top:507px;width:21px;height:16.5px;background:#efefef;"></div>
<div class="abs" style="left:399.5px;top:290px;width:1px;height:217px;background:#ececec;"></div>
<div class="abs" style="left:402px;top:462.3px;width:555px;height:16.9px;background:#e8f2fe;"></div>
<div class="abs" style="left:957px;top:290px;width:17px;height:217px;background:linear-gradient(90deg,#e2e2e2,#f6f6f6 45%,#fff 85%,#f4f4f4);"></div>
<div class="abs" style="left:974px;top:290px;width:15px;height:217px;background:#efefef;"></div>
<div class="abs" style="left:957px;top:507px;width:32px;height:16.5px;background:#f1f1f1;"></div>
<div class="abs" style="left:400.5px;top:507px;width:556.5px;height:16.5px;background:linear-gradient(#e4e4e4,#f6f6f6 45%,#fff 85%,#f4f4f4);"></div>
<div class="abs" style="left:976.4px;top:467px;width:10.6px;height:5.6px;border:1.3px solid #f4b4a8;box-sizing:border-box;background:#fdf0ee;"></div>
<div class="abs" style="left:976.7px;top:493px;width:10px;height:9.6px;border:1px solid #e0705c;box-sizing:border-box;background:#f58b78;"></div>
<div class="abs" style="left:975px;top:506px;width:13px;height:1px;background:#9a9a9a;"></div>
<svg class="abs" style="left:387.9px;top:292.8px" width="12" height="12" viewBox="0 0 12 12"><circle cx="6" cy="6" r="4.9" fill="#e3ebf5" stroke="#9db3cf" stroke-width="1"/><path d="M3.3 6 H8.7" stroke="#6f8fb8" stroke-width="1.2"/></svg>
<div class="code" style="left:402.3px;top:290px;"><span class="k">module</span> Test<span class="o">.</span>Lambda<span class="o">.</span>Syntax <span class="k">where</span></div>
<div class="code" style="left:402.3px;top:325px;"><span class="k">import</span> Data<span class="o">.</span>EBNF</div>
<div class="code" style="left:402.3px;top:359px;">Var <span class="o">::=</span> String <span class="o">{</span>Var<span class="o">}</span></div>
<div class="code" style="left:402.3px;top:394px;">Exp <span class="o">::=</span> Var                  <span class="o">{</span>EVar<span class="o">}</span></div>
<div class="code" style="left:402.3px;top:411px;">      <span class="o">|</span> "<span class="s">(</span>" Exp Exp "<span class="s">)</span>"      <span class="o">{</span>EApp<span class="o">}</span></div>
<div class="code" style="left:402.3px;top:428px;">      <span class="o">|</span> "<span class="s">lambda</span>" Var "<span class="o">.</span>" Exp <span class="o">{</span>EAbs<span class="o">}</span></div>
<div class="code" style="left:402.3px;top:446px;">      <span class="o">|</span> "<span class="s">(</span>" Exp "<span class="s">)</span>"</div>
<svg class="abs" style="left:387.9px;top:465.1px" width="12" height="12" viewBox="0 0 12 12"><circle cx="6" cy="6" r="4.9" fill="#e3ebf5" stroke="#9db3cf" stroke-width="1"/><path d="M3.3 6 H8.7" stroke="#6f8fb8" stroke-width="1.2"/></svg>
<div class="code" style="left:402.3px;top:463px;">      <span class="o">|</span> Exp Exp</div>
<svg class="abs" style="left:467px;top:475.3px" width="30" height="3" viewBox="0 0 30 3"><path d="M0 2.2 L1.5 0.6 L3.0 2.2 L4.5 0.6 L6.0 2.2 L7.5 0.6 L9.0 2.2 L10.5 0.6 L12.0 2.2 L13.5 0.6 L15.0 2.2 L16.5 0.6 L18.0 2.2 L19.5 0.6 L21.0 2.2 L22.5 0.6 L24.0 2.2 L25.5 0.6 L27.0 2.2 L28.5 0.6" fill="none" stroke="#f0767a" stroke-width=".9"/></svg>
<div class="abs" style="left:379.5px;top:462.3px;width:8.5px;height:17px;background:#e6d3e3;"></div>
<svg class="abs" style="left:366.7px;top:463.6px" width="14" height="14" viewBox="0 0 14 14"><circle cx="7" cy="7" r="6.2" fill="#e4323a" stroke="#b81820" stroke-width=".8"/><circle cx="7" cy="5.6" r="4.4" fill="#f0686c" opacity=".45"/><path d="M4.3 4.3 L9.7 9.7 M9.7 4.3 L4.3 9.7" stroke="#fff" stroke-width="1.7" stroke-linecap="round"/></svg>
<div class="abs" style="left:371px;top:483.7px;width:220px;height:31.3px;background:#fdfbc4;box-shadow:0 3px 8px rgba(0,0,0,.35);"></div>
<div class="abs" style="left:371px;top:499.6px;width:220px;height:1px;background:#7a7a6a;"></div>
<div class="t tree" style="left:372.7px;top:486px;font-size:13.2px;letter-spacing:0.40px;">Left-recursive production detected.</div>
<div class="t tree" style="left:494.2px;top:504px;font-size:10.5px;letter-spacing:0.22px;color:#8a8a78;">Press 'F2' for focus</div>
<div class="abs" style="left:354.5px;top:541.3px;width:646px;height:347px;background:#fff;border-radius:8px;box-shadow:0 1px 1px rgba(0,0,0,.25);"></div>
<div class="abs" style="left:354.5px;top:541.3px;width:646px;height:29px;background:linear-gradient(#cfcfcf,#dcdcdc 50%,#d4d4d4);border-radius:8px 8px 0 0;"></div>
<div class="abs" style="left:354.5px;top:541.3px;width:111px;height:29px;background:#fff;border-radius:8px 8px 0 0;box-shadow:1px 0 1px rgba(0,0,0,.2);"></div>
<svg class="abs" style="left:361.8px;top:550.5px" width="15" height="15" viewBox="0 0 15 15"><rect x="1" y="1.2" width="12.6" height="12.6" fill="#fdfdfe" stroke="#7f93b8" stroke-width="1"/><rect x="1.5" y="1.7" width="11.6" height="2.2" fill="#3f7fc8"/><path d="M1.5 4.6 H13" stroke="#e6c36a" stroke-width=".9"/></svg>
<div class="t tabt" style="left:383.0px;top:550px;font-size:14.2px;letter-spacing:-0.30px;">Eval.shs</div>
<svg class="abs" style="left:444.5px;top:551.5px" width="13" height="13" viewBox="0 0 13 13"><path d="M1.2 3 L3 1.2 L6.5 4.3 L10 1.2 L11.8 3 L8.7 6.5 L11.8 10 L10 11.8 L6.5 8.7 L3 11.8 L1.2 10 L4.3 6.5 Z" fill="#fff" stroke="#222" stroke-width="1.1" stroke-linejoin="round"/></svg>
<div class="abs" style="left:365.8px;top:573.8px;width:13.5px;height:302.2px;background:#efefef;"></div>
<div class="abs" style="left:379.3px;top:859px;width:21px;height:17px;background:#efefef;"></div>
<div class="abs" style="left:399.5px;top:573.8px;width:1px;height:285px;background:#ececec;"></div>
<div class="abs" style="left:402px;top:643.2px;width:555px;height:16.8px;background:#e8f2fe;"></div>
<div class="abs" style="left:380px;top:573.8px;width:577px;height:285.2px;overflow:hidden;"><div class="abs" style="left:-380px;top:-573.8px;">
<svg class="abs" style="left:387.9px;top:576.3px" width="12" height="12" viewBox="0 0 12 12"><circle cx="6" cy="6" r="4.9" fill="#e3ebf5" stroke="#9db3cf" stroke-width="1"/><path d="M3.3 6 H8.7" stroke="#6f8fb8" stroke-width="1.2"/></svg>
<div class="code" style="left:402.3px;top:574px;"><span class="k">module</span> Test<span class="o">.</span>Lambda<span class="o">.</span>Eval <span class="k">where</span></div>
<div class="code" style="left:402.3px;top:608px;"><span class="k">import</span> Data<span class="o">.</span>List<span class="o">((</span>\\<span class="o">))</span></div>
<div class="code" style="left:402.3px;top:643px;"><span class="k">import</span> Test<span class="o">.</span>Lambda<span class="o">.</span>Syntax</div>
<svg class="abs" style="left:387.9px;top:679.7px" width="12" height="12" viewBox="0 0 12 12"><circle cx="6" cy="6" r="4.9" fill="#e3ebf5" stroke="#9db3cf" stroke-width="1"/><path d="M3.3 6 H8.7" stroke="#6f8fb8" stroke-width="1.2"/></svg>
<div class="code" style="left:402.3px;top:677px;">reduce <span class="o">|[</span> <span class="o">((</span><span class="k">lambda</span> <span class="o">$</span>v<span class="o">.</span> <span class="o">$</span>b<span class="o">)</span> <span class="o">$</span>e<span class="o">)</span> <span class="o">]|</span></div>
<div class="code" style="left:402.3px;top:695px;">  <span class="o">|</span> isVal e <span class="o">=</span> subst v e b</div>
<svg class="abs" style="left:387.9px;top:714.1px" width="12" height="12" viewBox="0 0 12 12"><circle cx="6" cy="6" r="4.9" fill="#e3ebf5" stroke="#9db3cf" stroke-width="1"/><path d="M3.3 6 H8.7" stroke="#6f8fb8" stroke-width="1.2"/></svg>
<div class="code" style="left:402.3px;top:712px;">reduce <span class="o">|[</span> <span class="o">($</span>e1 <span class="o">$</span>e2<span class="o">)</span> <span class="o">]|</span></div>
<div class="code" style="left:402.3px;top:729px;">  <span class="o">|</span> not $ isVal e1 <span class="o">=</span> <span class="o">|[</span> <span class="o">($(</span>reduce e1<span class="o">)</span> <span class="o">$</span>e2<span class="o">)</span> <span class="o">]|</span></div>
<div class="code" style="left:402.3px;top:746px;">  <span class="o">|</span> not $ isVal e2 <span class="o">=</span> <span class="o">|[</span> <span class="o">($</span>e1 <span class="o">$(</span>reduce e2<span class="o">))</span> <span class="o">]|</span></div>
<svg class="abs" style="left:387.9px;top:765.8px" width="12" height="12" viewBox="0 0 12 12"><circle cx="6" cy="6" r="4.9" fill="#e3ebf5" stroke="#9db3cf" stroke-width="1"/><path d="M3.3 6 H8.7" stroke="#6f8fb8" stroke-width="1.2"/></svg>
<div class="code" style="left:402.3px;top:764px;">reduce <span class="o">|[</span> <span class="k">Exp</span> <span class="o">|</span> <span class="k">Var$</span>v <span class="o">]|</span> <span class="o">=</span> error $ <span class="s">"free variable "</span> ++ show v</div>
<svg class="abs" style="left:387.9px;top:800.3px" width="12" height="12" viewBox="0 0 12 12"><circle cx="6" cy="6" r="4.9" fill="#e3ebf5" stroke="#9db3cf" stroke-width="1"/><path d="M3.3 6 H8.7" stroke="#6f8fb8" stroke-width="1.2"/></svg>
<div class="code" style="left:402.3px;top:798px;">subst v e <span class="o">|[</span> <span class="k">Exp</span> <span class="o">|</span> <span class="k">Var$</span>w <span class="o">]|</span></div>
<div class="code" style="left:402.3px;top:815px;">  <span class="o">|</span> v <span class="o">==</span> w    <span class="o">=</span> e</div>
<div class="code" style="left:402.3px;top:832px;">  <span class="o">|</span> otherwise <span class="o">=</span> <span class="o">|[</span> <span class="k">Exp</span> <span class="o">|</span> <span class="k">Var$</span>w <span class="o">]|</span></div>
<svg class="abs" style="left:387.9px;top:852.0px" width="12" height="12" viewBox="0 0 12 12"><circle cx="6" cy="6" r="4.9" fill="#e3ebf5" stroke="#9db3cf" stroke-width="1"/><path d="M3.3 6 H8.7" stroke="#6f8fb8" stroke-width="1.2"/></svg>
<div class="code" style="left:402.3px;top:850px;">subst v e <span class="o">|[</span> <span class="o">($</span>e1 <span class="o">$</span>e2<span class="o">)</span> <span class="o">]|</span></div>
</div></div>
<div class="abs" style="left:400.5px;top:859px;width:556.5px;height:17px;background:linear-gradient(#dcdcdc,#f3f3f3 40%,#fff 85%,#f4f4f4);"></div>
<div class="abs" style="left:957px;top:859px;width:32px;height:17px;background:#f1f1f1;"></div>
<div class="abs" style="left:957px;top:573.8px;width:16.5px;height:285.2px;background:linear-gradient(90deg,#d8d8d8,#f2f2f2 40%,#fff 80%,#f2f2f2);"></div>
<div class="abs" style="left:973.5px;top:573.8px;width:15.5px;height:285.2px;background:#f0f0f0;"></div>
<div class="abs" style="left:957.6px;top:581px;width:15.4px;height:67.5px;border-radius:7.7px;background:linear-gradient(90deg,#2f78d8,#6cb0f4 25%,#b8dcfb 50%,#7cbaf5 75%,#2f78d8);box-shadow:inset 0 0 0 1px #2a58a8,inset 0 3px 3px rgba(20,50,120,.55),inset 0 -3px 3px rgba(20,50,120,.4);"></div>
<div class="abs" style="left:957px;top:813px;width:16.5px;height:46px;background:linear-gradient(90deg,#dcdcdc,#f4f4f4 40%,#fff 80%,#f0f0f0);"></div>
<div class="abs" style="left:957px;top:806px;width:16.5px;height:16px;border-radius:0 0 8px 8px;background:linear-gradient(90deg,#d8d8d8,#f2f2f2 40%,#fff 80%,#f2f2f2);box-shadow:0 1px 1px rgba(0,0,0,.3);"></div>
<div class="abs" style="left:957px;top:840px;width:16.5px;height:1px;background:#c4c4c4;"></div>
<div class="abs" style="left:957px;top:858.3px;width:16.5px;height:1px;background:#c4c4c4;"></div>
<svg class="abs" style="left:961px;top:827px" width="9" height="8" viewBox="0 0 9 8"><path d="M4.5 .5 L8.6 7.5 H.4 Z" fill="#333"/></svg>
<svg class="abs" style="left:961px;top:845px" width="9" height="8" viewBox="0 0 9 8"><path d="M4.5 7.5 L8.6 .5 H.4 Z" fill="#333"/></svg>
<!-- outline -->
<div class="panel" style="left:1016px;top:243px;width:212px;height:650px;"></div>
<div class="abs tab" style="left:1016px;top:243px;width:105px;height:28.5px;"></div>
<svg class="abs" style="left:1023px;top:250px" width="17" height="17" viewBox="0 0 17 17"><rect x="1" y="0.2" width="5.8" height="5.8" fill="#c4e2fa" stroke="#2f7fc8" stroke-width="1.2"/><rect x="1" y="10.6" width="5.8" height="5.8" fill="#c4e2fa" stroke="#2f7fc8" stroke-width="1.2"/><rect x="9" y="6.4" width="3" height="3" fill="#fff" stroke="#2f7fc8" stroke-width="1"/><path d="M9 3.4 H15.5 M13.2 8 H15.5 M9 13.2 H15.5" stroke="#2f7fc8" stroke-width="1.2"/></svg>
<div class="t tabt" style="left:1044.0px;top:251px;font-size:14.2px;letter-spacing:0.39px;">Outline</div>
<svg class="abs" style="left:1101.3px;top:252.3px" width="13" height="13" viewBox="0 0 13 13"><path d="M1.2 3 L3 1.2 L6.5 4.3 L10 1.2 L11.8 3 L8.7 6.5 L11.8 10 L10 11.8 L6.5 8.7 L3 11.8 L1.2 10 L4.3 6.5 Z" fill="#fff" stroke="#222" stroke-width="1.1" stroke-linejoin="round"/></svg>
<svg class="abs" style="left:1145px;top:247px" width="22" height="22" viewBox="0 0 22 22"><path d="M4.2 3 V17.5 M1.6 14.6 L4.2 18 L6.8 14.6" fill="none" stroke="#5a6a7a" stroke-width="1.1"/><text x="7.4" y="10.6" font-family="Liberation Serif,serif" font-weight="bold" font-size="14.5" fill="#1f8a70">a</text><text x="12.4" y="19.6" font-family="Liberation Serif,serif" font-weight="bold" font-size="14.5" fill="#a0359a">z</text></svg>
<div class="abs" style="left:1175.2px;top:251.6px;width:12px;height:5px;border:1.6px solid #1a1a1a;border-radius:1px;box-sizing:border-box;background:#fff"></div>
<div class="abs" style="left:1200.5px;top:251.6px;width:11.8px;height:11.2px;border:1.4px solid #1a1a1a;border-top-width:2.4px;border-radius:1px;box-sizing:border-box;background:#fff"></div>
<div class="t tree" style="left:1044.2px;top:276px;font-size:13.2px;letter-spacing:0.44px;">Test</div>
<div class="t tree" style="left:1044.2px;top:294px;font-size:13.2px;letter-spacing:0.14px;">reduce</div>
<div class="t tree" style="left:1044.2px;top:311px;font-size:13.2px;letter-spacing:0.27px;">subst</div>
<div class="t tree" style="left:1044.2px;top:328px;font-size:13.2px;letter-spacing:-0.14px;">w'</div>
<div class="t tree" style="left:1044.2px;top:345px;font-size:13.2px;letter-spacing:0.45px;">b'</div>
<div class="t tree" style="left:1044.2px;top:363px;font-size:13.2px;letter-spacing:0.15px;">isVal</div>
<div class="t tree" style="left:1044.2px;top:380px;font-size:13.2px;letter-spacing:0.15px;">isVal</div>
<div class="t tree" style="left:1044.2px;top:397px;font-size:13.2px;letter-spacing:0.15px;">freeVars</div>
<div class="t tree" style="left:1044.2px;top:414px;font-size:13.2px;letter-spacing:0.15px;">freeVars</div>
<div class="t tree" style="left:1044.2px;top:432px;font-size:13.2px;letter-spacing:0.15px;">freeVars</div>
<div class="t tree" style="left:1044.2px;top:449px;font-size:13.2px;letter-spacing:-0.11px;">var</div>
<div class="t tree" style="left:1044.2px;top:466px;font-size:13.2px;letter-spacing:0.50px;">ident</div>
<div class="t tree" style="left:1044.2px;top:484px;font-size:13.2px;letter-spacing:0.25px;">zero</div>
<div class="t tree" style="left:1044.2px;top:501px;font-size:13.2px;letter-spacing:-0.14px;">succ</div>
<div class="t tree" style="left:1044.2px;top:518px;font-size:13.2px;letter-spacing:0.27px;">const</div>
<div class="t tree" style="left:1044.2px;top:535px;font-size:13.2px;letter-spacing:-0.15px;">app</div>
<div class="t tree" style="left:1044.2px;top:553px;font-size:13.2px;letter-spacing:0.09px;">identEta</div>
<!-- problems -->
<div class="panel" style="left:352px;top:903px;width:876px;height:137px;"></div>
<div class="abs tab" style="left:352px;top:903px;width:118px;height:29px;"></div>
<svg class="abs" style="left:355.5px;top:908.5px" width="19" height="20" viewBox="0 0 19 20"><path d="M8 3.5 H17 L15.5 8 L17 12.5 L14.5 17.5 H9" fill="#f4f7fc" stroke="#9fb0cc" stroke-width="1"/><path d="M14.8 3.5 V17" stroke="#c9d4e6" stroke-width="1"/><circle cx="8" cy="5" r="2.7" fill="#e23a3a" stroke="#b82020" stroke-width=".6"/><path d="M6 13 L8.4 9.5 L10.8 13 Z" fill="#f6c845" stroke="#c79a20" stroke-width=".6"/><rect x="1.2" y="10.8" width="7.2" height="7.6" fill="#e0333f" stroke="#c01828" stroke-width=".4"/><path d="M3.1 12.8 l3.4 3.8 m0 -3.8 l-3.4 3.8" stroke="#fff" stroke-width="1.2"/></svg>
<div class="t tabt" style="left:379.5px;top:911px;font-size:14.2px;letter-spacing:0.04px;">Problems</div>
<svg class="abs" style="left:449px;top:912px" width="13" height="13" viewBox="0 0 13 13"><path d="M1.2 3 L3 1.2 L6.5 4.3 L10 1.2 L11.8 3 L8.7 6.5 L11.8 10 L10 11.8 L6.5 8.7 L3 11.8 L1.2 10 L4.3 6.5 Z" fill="#fff" stroke="#222" stroke-width="1.1" stroke-linejoin="round"/></svg>
<div class="t tabt" style="left:477.9px;top:913px;font-size:12.4px;letter-spacing:-0.88px;color:#6f9fd0;">@</div>
<div class="t tabt" style="left:497.1px;top:911px;font-size:14.2px;letter-spacing:-0.41px;color:#8c8c8c;">Javadoc</div>
<svg class="abs" style="left:560px;top:909.5px" width="18" height="19" viewBox="0 0 18 19"><path d="M2.5 1.5 H9.5 L12.5 4.5 V14.5 H2.5 Z" fill="#fdfdfe" stroke="#c8b078" stroke-width=".9"/><path d="M4.5 5 H8 M4.5 7.5 H10 M4.5 10 H10" stroke="#a9bcd8" stroke-width=".9"/><path d="M7 12.5 H12 V10 L16.5 14 L12 18 V15.5 H7 Z" fill="#f9dd8a" stroke="#c89b2c" stroke-width=".8"/></svg>
<div class="t tabt" style="left:582.7px;top:911px;font-size:14.2px;letter-spacing:0.30px;color:#8c8c8c;">Declaration</div>
<svg class="abs" style="left:672px;top:910px" width="17" height="17" viewBox="0 0 17 17"><rect x="1.5" y="1.5" width="13.5" height="10.5" rx="1" fill="#e9eff8" stroke="#5f7faf" stroke-width="1.1"/><rect x="3.3" y="3.3" width="9.9" height="6.6" fill="#fff" stroke="#9fb4d6" stroke-width=".6"/><path d="M4.5 5 H9.5 M4.5 7 H8" stroke="#5f7faf" stroke-width=".9"/><path d="M4 14.5 H12.5" stroke="#5f7faf" stroke-width="1.8"/></svg>
<div class="t tabt" style="left:693.4px;top:911px;font-size:14.2px;letter-spacing:0.11px;color:#8c8c8c;">Console</div>
<svg class="abs" style="left:1153.5px;top:908.5px" width="13" height="8" viewBox="0 0 13 8"><path d="M1 1 H12 L6.5 7 Z" fill="#fff" stroke="#1a1a1a" stroke-width="1.3" stroke-linejoin="round"/></svg>
<div class="abs" style="left:1175.5px;top:911.5px;width:11.5px;height:5px;border:1.5px solid #1a1a1a;border-radius:1px;box-sizing:border-box;background:#fff"></div>
<div class="abs" style="left:1200px;top:911.5px;width:12px;height:11.5px;border:1.4px solid #1a1a1a;border-top-width:2.6px;border-radius:1px;box-sizing:border-box;background:#fff"></div>
<div class="t tree" style="left:361.2px;top:937px;font-size:13.2px;letter-spacing:0.41px;">1 error, 0 warnings, 0 others</div>
<div class="abs" style="left:358.8px;top:951.3px;width:861px;height:21.2px;background:linear-gradient(#fff,#f4f4f4 45%,#e6e6e6 52%,#f2f2f2 85%,#fafafa);border-top:1px solid #8f8f8f;border-bottom:1px solid #c2c2c2;border-right:1px solid #c6c6c6;box-sizing:border-box;"></div>
<div class="abs" style="left:358.8px;top:952.3px;width:344.4px;height:20.2px;background:linear-gradient(#b4d4f1,#8cc1ee 40%,#74b4ea 52%,#8ec6f0 80%,#a6d4f5);border-bottom:1px solid #7aaede;box-sizing:border-box;"></div>
<div class="abs" style="left:703.2px;top:952.3px;width:1px;height:78.7px;background:#c4c4c4;"></div>
<div class="abs" style="left:806.4px;top:952.3px;width:1px;height:78.7px;background:#c4c4c4;"></div>
<div class="abs" style="left:990.7px;top:952.3px;width:1px;height:78.7px;background:#c4c4c4;"></div>
<div class="abs" style="left:1094.2px;top:952.3px;width:1px;height:78.7px;background:#c4c4c4;"></div>
<div class="abs" style="left:1197.3px;top:952.3px;width:1px;height:78.7px;background:#c4c4c4;"></div>
<div class="t tree" style="left:360.8px;top:956px;font-size:13.2px;letter-spacing:0.36px;">Description</div>
<div class="t tree" style="left:706.3px;top:956px;font-size:13.2px;letter-spacing:-0.29px;">Resource</div>
<div class="t tree" style="left:809.4px;top:956px;font-size:13.2px;letter-spacing:-0.61px;">Path</div>
<div class="t tree" style="left:993.2px;top:956px;font-size:13.2px;letter-spacing:0.16px;">Location</div>
<div class="t tree" style="left:1097.5px;top:956px;font-size:13.2px;letter-spacing:-0.30px;">Type</div>
<svg class="abs" style="left:690px;top:958px" width="10" height="8" viewBox="0 0 10 8"><path d="M5 .5 L9.6 7.5 H.4 Z" fill="#3a4a5a"/></svg>
<svg class="abs" style="left:367.7px;top:977.5px" width="11" height="9" viewBox="0 0 11 9"><path d="M.3 .5 H10.7 L5.5 8.8 Z" fill="#8b8b8b"/></svg>
<svg class="abs" style="left:383.4px;top:975px" width="14" height="14" viewBox="0 0 14 14"><circle cx="7" cy="7" r="6.2" fill="#e4323a" stroke="#b81820" stroke-width=".8"/><circle cx="7" cy="5.6" r="4.4" fill="#f0686c" opacity=".45"/><path d="M4.3 4.3 L9.7 9.7 M9.7 4.3 L4.3 9.7" stroke="#fff" stroke-width="1.7" stroke-linecap="round"/></svg>
<div class="t tree" style="left:401.1px;top:976px;font-size:13.2px;letter-spacing:0.25px;">Errors (1 item)</div>
<div class="abs" style="left:358.8px;top:992.6px;width:861px;height:19.2px;background:#e9effc;"></div>
<div class="abs" style="left:703.2px;top:992.6px;width:1px;height:19.2px;background:#c4c4c4;"></div>
<div class="abs" style="left:806.4px;top:992.6px;width:1px;height:19.2px;background:#c4c4c4;"></div>
<div class="abs" style="left:990.7px;top:992.6px;width:1px;height:19.2px;background:#c4c4c4;"></div>
<div class="abs" style="left:1094.2px;top:992.6px;width:1px;height:19.2px;background:#c4c4c4;"></div>
<div class="abs" style="left:1197.3px;top:992.6px;width:1px;height:19.2px;background:#c4c4c4;"></div>
<svg class="abs" style="left:401.6px;top:994.4px" width="14" height="14" viewBox="0 0 14 14"><circle cx="7" cy="7" r="6.2" fill="#e4323a" stroke="#b81820" stroke-width=".8"/><circle cx="7" cy="5.6" r="4.4" fill="#f0686c" opacity=".45"/><path d="M4.3 4.3 L9.7 9.7 M9.7 4.3 L4.3 9.7" stroke="#fff" stroke-width="1.7" stroke-linecap="round"/></svg>
<div class="t tree" style="left:419.8px;top:995px;font-size:13.2px;letter-spacing:0.40px;">Left-recursive production detected.</div>
<div class="t tree" style="left:706.3px;top:995px;font-size:13.2px;letter-spacing:-0.06px;">Syntax.shs</div>
<div class="t tree" style="left:810.5px;top:995px;font-size:13.2px;letter-spacing:0.69px;">/haskell/src/Test/Lambda</div>
<div class="t tree" style="left:993.2px;top:995px;font-size:13.2px;letter-spacing:0.57px;">line 11</div>
<div class="t tree" style="left:1097.5px;top:995px;font-size:13.2px;letter-spacing:0.44px;">org.strategox...</div>
<!-- status -->
<div class="abs" style="left:570px;top:1046px;width:1px;height:26px;background:#9c9c9c;box-shadow:1px 0 0 #f6f6f6;"></div>
<div class="abs" style="left:689.3px;top:1046px;width:1px;height:26px;background:#9c9c9c;box-shadow:1px 0 0 #f6f6f6;"></div>
<div class="abs" style="left:801.5px;top:1046px;width:1px;height:26px;background:#9c9c9c;box-shadow:1px 0 0 #f6f6f6;"></div>
<div class="t tree" style="left:577.4px;top:1053px;font-size:13.2px;letter-spacing:0.21px;">Writable</div>
<div class="t tree" style="left:697.7px;top:1053px;font-size:13.2px;letter-spacing:0.18px;">Smart Insert</div>
<div class="t tree" style="left:810.5px;top:1053px;font-size:13.2px;letter-spacing:0.48px;">5 : 26</div>
<svg class="abs" style="left:1220px;top:1057px" width="14" height="14" viewBox="0 0 14 14"><path d="M1 13.5 L13.5 1 M5 13.5 L13.5 5 M9 13.5 L13.5 9" stroke="#9a9a9a" stroke-width="1"/><path d="M2 13.5 L13.5 2 M6 13.5 L13.5 6 M10 13.5 L13.5 10" stroke="#fff" stroke-width=".8"/></svg>
</div>
</body></html>
